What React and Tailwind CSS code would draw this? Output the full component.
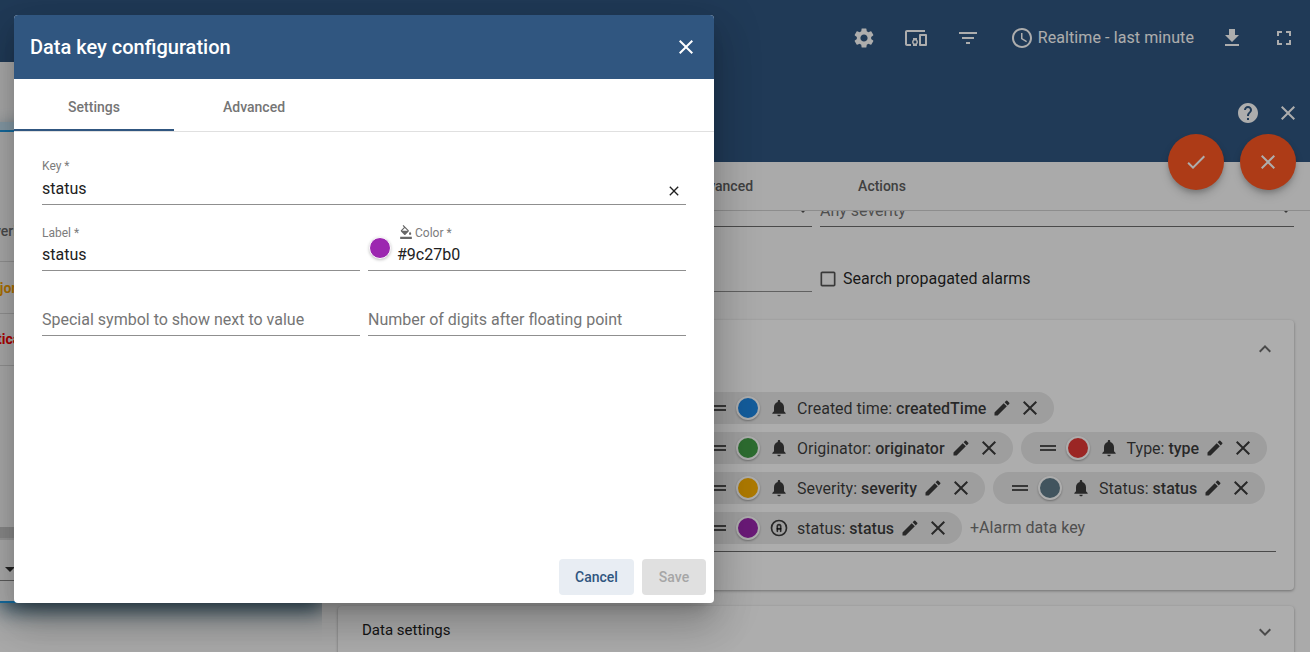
import React from "react";
import {
  MdSettings,
  MdDevicesOther,
  MdFilterList,
  MdAccessTime,
  MdFileDownload,
  MdFullscreen,
  MdHelp,
  MdClose,
  MdCheck,
  MdEdit,
  MdNotifications,
  MdDragHandle,
  MdKeyboardArrowUp,
  MdKeyboardArrowDown,
  MdFormatColorFill,
  MdCheckBoxOutlineBlank,
  MdArrowDropDown,
} from "react-icons/md";
import { TbCircleLetterA } from "react-icons/tb";

const chips = [
  { label: "Created time", name: "createdTime", color: "bg-[#1e88e5]" },
  { label: "Originator", name: "originator", color: "bg-[#43a047]" },
  { label: "Type", name: "type", color: "bg-[#e53935]" },
  { label: "Severity", name: "severity", color: "bg-[#ffb300]" },
  { label: "Status", name: "status", color: "bg-[#607d8b]" },
  { label: "status", name: "status", color: "bg-[#9c27b0]", attr: true },
];

const Chip = ({ label, name, color, attr }) => (
  <div className="flex items-center h-8 rounded-2xl bg-[#e9e9e9] pl-[15px] pr-3 text-base text-black/[0.75]">
    <MdDragHandle className="w-6 h-6 text-black/[0.65]" />
    <span className={`ml-[6px] w-6 h-6 rounded-full border-2 border-white shadow-[0_1px_2px_rgba(0,0,0,0.3)] ${color}`} />
    <span className="ml-[9px] w-5 flex justify-center">
      {attr ? <TbCircleLetterA className="w-5 h-5" /> : <MdNotifications className="w-5 h-5" />}
    </span>
    <span className="ml-2 mt-px whitespace-nowrap">
      {label}: <span className="font-medium">{name}</span>
    </span>
    <MdEdit className="ml-[6px] w-5 h-5" />
    <MdClose className="ml-[6px] w-6 h-6" />
  </div>
);

const Field = ({ label, value, placeholder, labelClass = "pt-px" }) => (
  <div className="relative h-[46px] border-b border-[#8f8f8f]">
    {label && <div className={`text-xs leading-[14px] text-[#7c7c7c] ${labelClass}`}>{label}</div>}
    {value && <div className="absolute left-0 top-[20px] text-base leading-5 text-[#212121]">{value}</div>}
    {placeholder && <div className="absolute left-0 top-[20px] text-base leading-5 text-[#757575]">{placeholder}</div>}
  </div>
);

const LeftPanel = () => (
  <div className="w-[322px] shrink-0 flex flex-col bg-[#fbfbfb]">
    <div className="h-[62px] bg-[#305680]" />
    <div className="h-[60px]" />
    <div className="h-[481px] flex flex-col border-b-2 border-[#1f9ce8] shadow-[0_8px_20px_rgba(20,75,105,0.8)]">
      <div className="h-[10px] shrink-0 bg-[#c5e4f5] border-b-2 border-[#1f9ce8]" />
      <div className="h-[78px] shrink-0" />
      <div className="h-[52px] shrink-0 border-b border-[#d8d8d8] pt-[11px] -ml-[22px] text-sm font-medium text-[#6f6f6f]">Severity</div>
      <div className="h-[52px] shrink-0 border-b border-[#d8d8d8] pt-[16px] -ml-[20px] text-sm font-bold text-[#ffa600]">Major</div>
      <div className="h-[52px] shrink-0 border-b border-[#d8d8d8] pt-[15px] -ml-[21px] text-sm font-bold text-[#ff0000]">Critical</div>
      <div className="h-[161px] shrink-0" />
      <div className="h-[11px] shrink-0 bg-[#cbcbcb]" />
      <div className="h-[43px] shrink-0 border-t-2 border-[#e0e0e0] border-b border-b-[#888] pt-[17px]">
        <MdArrowDropDown className="w-6 h-6 -ml-[2px] text-[#333]" />
      </div>
    </div>
  </div>
);

const DrawerHeader = () => (
  <div className="h-[162px] bg-[#305680] text-white flex flex-col">
    <div className="h-[76px] flex items-center justify-end pr-[14px]">
      <MdSettings className="w-6 h-6" />
      <MdDevicesOther className="w-6 h-6 ml-7" />
      <MdFilterList className="w-6 h-6 ml-7" />
      <MdAccessTime className="w-6 h-6 ml-[30px]" />
      <span className="ml-[4px] text-base tracking-[0.09px]">Realtime - last minute</span>
      <MdFileDownload className="w-6 h-6 ml-[26px]" />
      <MdFullscreen className="w-6 h-6 ml-7" />
    </div>
    <div className="flex justify-end items-center pt-[25px] pr-[10px] gap-4">
      <MdHelp className="w-6 h-6" />
      <MdClose className="w-6 h-6" />
    </div>
  </div>
);

const DrawerTabs = () => (
  <div className="h-[49px] border-b border-[#d0d0d0] flex text-sm font-medium text-[#5f5f5f] shrink-0">
    {["Data", "Settings", "Advanced", "Actions"].map((t) => (
      <div key={t} className="w-40 flex items-center justify-center">{t}</div>
    ))}
  </div>
);

const DrawerBody = () => (
  <div className="flex-1 overflow-hidden px-4">
    <div className="grid grid-cols-2 gap-2 h-[16px]">
      <div className="h-[16px] border-b border-[#6e6e6e] flex justify-end">
        <MdArrowDropDown className="w-4 h-4 -mt-[8px] mr-[1px] text-[#555]" />
      </div>
      <div className="h-[16px] border-b border-[#6e6e6e] flex justify-between overflow-hidden">
        <span className="-mt-[10px] text-base leading-5 text-[#757575]">Any severity</span>
        <MdArrowDropDown className="w-4 h-4 -mt-[8px] text-[#555]" />
      </div>
    </div>
    <div className="grid grid-cols-2 gap-2 h-[65px]">
      <div className="border-b border-[#8f8f8f]" />
      <div className="flex items-center gap-[5px] pt-[39px] text-base text-black/[0.87] -ml-[2px]">
        <MdCheckBoxOutlineBlank className="w-5 h-5 text-[#555]" />
        <span>Search propagated alarms</span>
      </div>
    </div>
    <div className="mt-[28px] h-[270px] rounded bg-white shadow-[0_1px_3px_rgba(0,0,0,0.35)] pl-6 pr-[18px] relative">
      <MdKeyboardArrowUp className="absolute right-[17px] top-[17px] w-6 h-6 text-[#6e6e6e]" />
      <div className="pt-[72px]">
        <div className="pl-[329px] pb-[7px] border-b border-[#6e6e6e] flex flex-wrap items-center gap-x-2 gap-y-2">
          {chips.map((c, i) => (
            <Chip key={i} {...c} />
          ))}
          <span className="text-base text-[#757575]">+Alarm data key</span>
        </div>
      </div>
    </div>
    <div className="mt-4 h-[60px] rounded-t bg-white shadow-[0_1px_3px_rgba(0,0,0,0.35)] flex items-center justify-between pl-6 pr-[17px] pb-[11px] text-[#212121]">
      <span className="text-[15px]">Data settings</span>
      <MdKeyboardArrowDown className="w-6 h-6 mt-[3px] text-[#6e6e6e]" />
    </div>
  </div>
);

const Dialog = () => (
  <div className="absolute z-30 left-[14px] top-[15px] w-[700px] h-[588px] rounded bg-white flex flex-col overflow-hidden shadow-[0_11px_15px_-7px_rgba(0,0,0,0.2),0_24px_38px_3px_rgba(0,0,0,0.14),0_9px_46px_8px_rgba(0,0,0,0.12)]">
    <div className="h-16 shrink-0 bg-[#305680] text-white flex items-center justify-between pl-4 pr-4">
      <h2 className="text-xl font-medium">Data key configuration</h2>
      <MdClose className="w-6 h-6" />
    </div>
    <div className="h-[53px] shrink-0 flex border-b border-[#e0e0e0] text-sm font-medium text-[#757575]">
      <div className="w-40 flex items-center justify-center border-b-2 border-[#305680] h-[52px] pt-[6px]">Settings</div>
      <div className="w-40 flex items-center justify-center h-[52px] pt-[4px]">Advanced</div>
    </div>
    <div className="px-7 pt-[27px]">
      <div className="relative">
        <Field label="Key *" value="status" labelClass="pt-0" />
        <MdClose className="absolute right-[4px] top-[24px] w-4 h-4 text-[#212121]" />
      </div>
      <div className="grid grid-cols-2 gap-2 mt-[20px]">
        <Field label="Label *" value="status" />
        <div className="relative h-[46px] border-b border-[#8f8f8f] pl-[31px]">
          <div className="flex items-center text-xs leading-[14px] pt-px text-[#7c7c7c]">
            <MdFormatColorFill className="w-[14px] h-[14px] -mt-[3px] text-[#666]" />
            <span className="ml-[2px]">Color *</span>
          </div>
          <div className="absolute left-[29px] top-[20px] text-base leading-5 text-[#212121]">#9c27b0</div>
          <span className="absolute left-[1px] top-[12px] w-[22px] h-[22px] rounded-full bg-[#9c27b0] border-[1px] border-white shadow-[0_1px_3px_rgba(0,0,0,0.25)]" />
        </div>
      </div>
      <div className="grid grid-cols-2 gap-2 mt-[19px]">
        <Field placeholder="Special symbol to show next to value" />
        <Field placeholder="Number of digits after floating point" />
      </div>
    </div>
    <div className="mt-auto flex justify-end gap-2 pr-2 pb-2">
      <button className="w-[75px] h-9 rounded bg-[#e8edf3] text-sm font-medium text-[#305680]">Cancel</button>
      <button className="w-16 h-9 rounded bg-[#e0e0e0] text-sm font-medium text-[#a6a6a6]">Save</button>
    </div>
  </div>
);

const App = () => (
  <div className="relative w-[1310px] h-[652px] overflow-hidden font-['Roboto',sans-serif] bg-[#fbfbfb]">
    <div className="flex h-full">
      <LeftPanel />
      <div className="relative z-10 flex-1 flex flex-col min-w-0 bg-[#fbfbfb]">
        <DrawerHeader />
        <DrawerTabs />
        <DrawerBody />
        <button className="absolute left-[846px] top-[134px] w-14 h-14 rounded-full bg-[#ff5722] text-white flex items-center justify-center shadow-[0_3px_5px_-1px_rgba(0,0,0,0.2),0_6px_10px_rgba(0,0,0,0.14)]">
          <MdCheck className="w-6 h-6" />
        </button>
        <button className="absolute left-[918px] top-[134px] w-14 h-14 rounded-full bg-[#ff5722] text-white flex items-center justify-center shadow-[0_3px_5px_-1px_rgba(0,0,0,0.2),0_6px_10px_rgba(0,0,0,0.14)]">
          <MdClose className="w-6 h-6" />
        </button>
      </div>
    </div>
    <div className="absolute inset-0 z-20 bg-black/[0.32]" />
    <Dialog />
  </div>
);

export default App;
